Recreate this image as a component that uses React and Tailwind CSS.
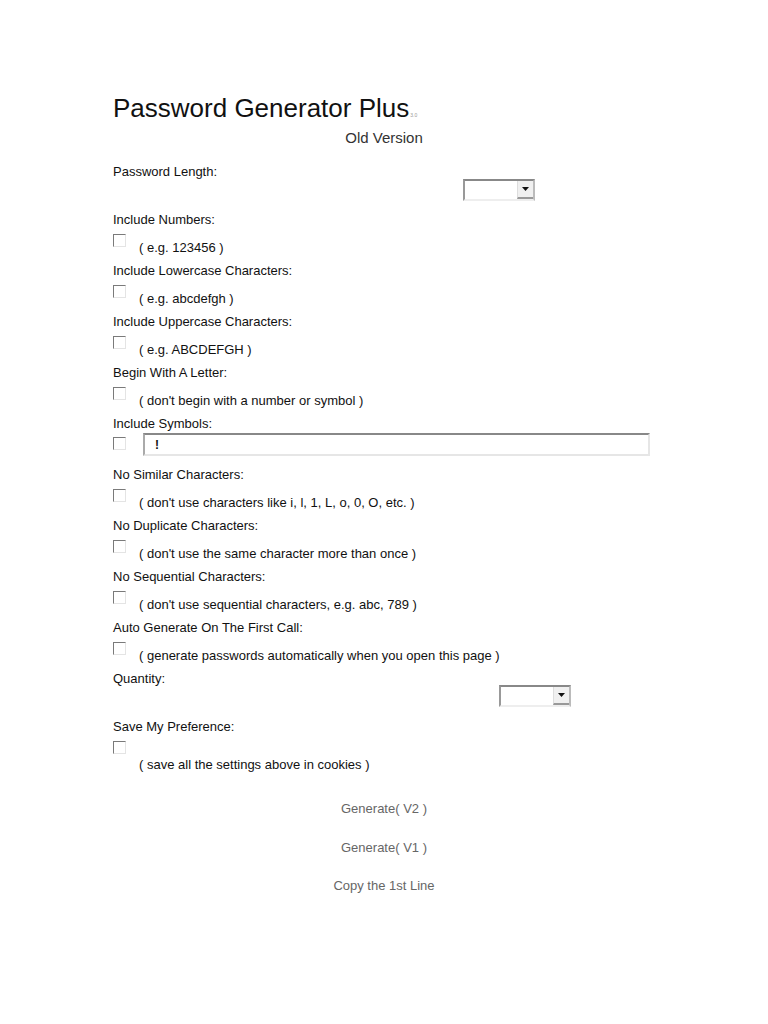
const checkOptions = [
  { label: "Include Numbers:", hint: "( e.g. 123456 )" },
  { label: "Include Lowercase Characters:", hint: "( e.g. abcdefgh )" },
  { label: "Include Uppercase Characters:", hint: "( e.g. ABCDEFGH )" },
  { label: "Begin With A Letter:", hint: "( don't begin with a number or symbol )" },
];

const moreOptions = [
  { label: "No Similar Characters:", hint: "( don't use characters like i, l, 1, L, o, 0, O, etc. )" },
  { label: "No Duplicate Characters:", hint: "( don't use the same character more than once )" },
  { label: "No Sequential Characters:", hint: "( don't use sequential characters, e.g. abc, 789 )" },
  { label: "Auto Generate On The First Call:", hint: "( generate passwords automatically when you open this page )" },
];

function Box() {
  return (
    <span className="block w-[13px] h-[13px] shrink-0 border border-t-[#7a7a7a] border-l-[#7a7a7a] border-r-[#e4e4e4] border-b-[#e4e4e4] bg-white" />
  );
}

function FakeSelect({ left }) {
  return (
    <div className={`flex h-[22px] w-[72px] border-2 border-t-[#888] border-l-[#999] border-r-[#bbb] border-b-[#eee] bg-white ${left}`}>
      <div className="flex-1" />
      <div className="w-[16px] h-full bg-[#f0f0f0] border-l border-[#ddd] border-b-2 border-b-[#999] flex items-center justify-center">
        <svg width="7" height="4" viewBox="0 0 7 4">
          <path d="M0 0h7L3.5 4z" fill="#111" />
        </svg>
      </div>
    </div>
  );
}

function CheckRow({ label, hint }) {
  return (
    <div className="h-[51px]">
      <div className="h-[20px] leading-[20px]">{label}</div>
      <div className="flex items-start gap-[13px]">
        <span className="mt-[4px]">
          <Box />
        </span>
        <span className="mt-[10px] leading-[16px]">{hint}</span>
      </div>
    </div>
  );
}

export default function App() {
  return (
    <div className="min-h-[1024px] bg-white text-[13px] text-[#111]" style={{ fontFamily: '"Liberation Sans", Arial, sans-serif' }}>
      <div className="pt-[93px] w-[768px]">
        <h1 className="pl-[113px] text-[26px] leading-[30px] text-[#111] font-normal">
          Password Generator Plus
          <span className="text-[5px] text-[#999] ml-[1px]">3.0</span>
        </h1>
        <div className="text-center text-[15px] leading-[18px] text-[#333] -mt-[1px]">Old Version</div>
      </div>

      <div className="pl-[113px] w-[768px]">
        <div className="mt-[15px] h-[48px]">
          <div className="h-[20px] leading-[20px]">Password Length:</div>
          <FakeSelect left="ml-[350px] -mt-[3px]" />
        </div>

        {checkOptions.map((o) => (
          <CheckRow key={o.label} label={o.label} hint={o.hint} />
        ))}

        <div className="h-[51px]">
          <div className="h-[20px] leading-[20px]">Include Symbols:</div>
          <div className="flex items-start gap-[17px]">
            <span className="mt-[3px]">
              <Box />
            </span>
            <div className="w-[507px] h-[23px] -mt-[1px] border-2 border-t-[#888] border-l-[#aaa] border-r-[#e6e6e6] border-b-[#e6e6e6] flex items-center pl-[10px] font-bold text-[12px]">
              !
            </div>
          </div>
        </div>

        {moreOptions.map((o) => (
          <CheckRow key={o.label} label={o.label} hint={o.hint} />
        ))}

        <div className="h-[48px]">
          <div className="h-[20px] leading-[20px]">Quantity:</div>
          <FakeSelect left="ml-[386px] -mt-[4px]" />
        </div>

        <div className="h-[60px]">
          <div className="h-[20px] leading-[20px]">Save My Preference:</div>
          <div className="flex items-start gap-[13px]">
            <span className="mt-[4px]">
              <Box />
            </span>
            <span className="mt-[20px] leading-[16px]">( save all the settings above in cookies )</span>
          </div>
        </div>
      </div>

      <div className="flex flex-col items-center text-[#666] text-[13px] mt-[24px]">
        <div className="h-[39px] leading-[16px]">Generate( V2 )</div>
        <div className="h-[38px] leading-[16px]">Generate( V1 )</div>
        <div className="leading-[16px]">Copy the 1st Line</div>
      </div>
    </div>
  );
}
